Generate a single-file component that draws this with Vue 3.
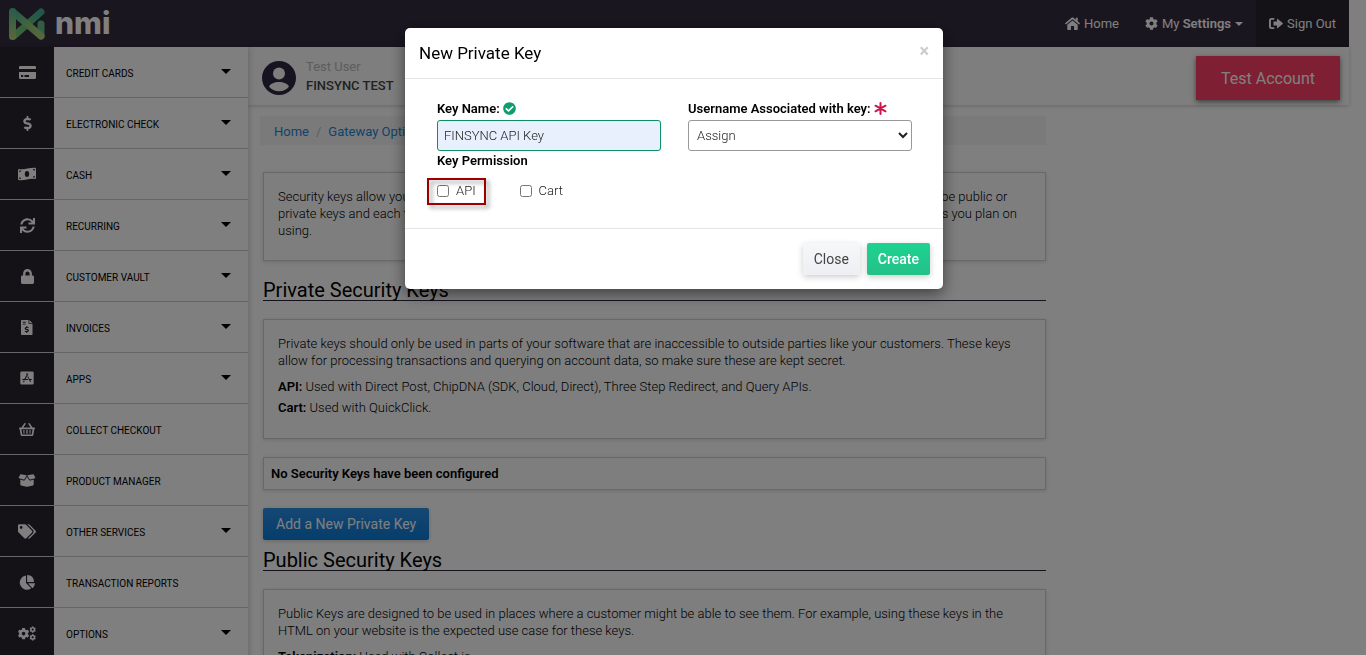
<script setup>
import { ref } from 'vue'

const cog = 'M487.4 315.7l-42.6-24.6c4.3-23.2 4.3-47 0-70.2l42.6-24.6c4.9-2.8 7.1-8.6 5.5-14-11.1-35.6-30-67.8-54.7-94.6-3.8-4.1-10-5.1-14.8-2.3L380.8 110c-17.9-15.4-38.5-27.3-60.8-35.1V25.8c0-5.6-3.9-10.5-9.4-11.7-36.7-8.2-74.3-7.8-109.2 0-5.5 1.2-9.4 6.1-9.4 11.7V75c-22.2 7.9-42.8 19.8-60.8 35.1L88.7 85.5c-4.9-2.8-11-1.9-14.8 2.3-24.7 26.7-43.6 58.9-54.7 94.6-1.7 5.4.6 11.2 5.5 14L67.3 221c-4.3 23.2-4.3 47 0 70.2l-42.6 24.6c-4.9 2.8-7.1 8.6-5.5 14 11.1 35.6 30 67.8 54.7 94.6 3.8 4.1 10 5.1 14.8 2.3l42.6-24.6c17.9 15.4 38.5 27.3 60.8 35.1v49.2c0 5.6 3.9 10.5 9.4 11.7 36.7 8.2 74.3 7.8 109.2 0 5.5-1.2 9.4-6.1 9.4-11.7v-49.2c22.2-7.9 42.8-19.8 60.8-35.1l42.6 24.6c4.9 2.8 11 1.9 14.8-2.3 24.7-26.7 43.6-58.9 54.7-94.6 1.5-5.5-.7-11.3-5.6-14.1zM256 336c-44.1 0-80-35.9-80-80s35.9-80 80-80 80 35.9 80 80-35.9 80-80 80z'

const icons = {
  card: { box: '0 0 17 13', w: 17, h: 13, paths: ['M1.300 0H15.700Q17 0 17 1.300V3H0V1.300Q0 0 1.300 0ZM0 6H17V11.700Q17 13 15.700 13H1.300Q0 13 0 11.700ZM2 9V11H4.200V9ZM5.500 9V11H10V9Z'] },
  dollar: { box: '0 0 288 512', w: 9, h: 15, paths: ['M209.2 233.4l-108-31.6C88.7 198.2 80 186.5 80 173.5c0-16.3 13.2-29.5 29.5-29.5h66.3c12.2 0 24.2 3.7 34.2 10.5 6.1 4.1 14.3 3.1 19.5-2l34.8-34c7.1-6.9 6.1-18.4-1.8-24.5C238 74.8 207.4 64.1 176 64V16c0-8.8-7.2-16-16-16h-32c-8.8 0-16 7.2-16 16v48h-2.5C45.8 64-5.4 118.7.5 183.6c4.2 46.1 39.4 83.6 83.8 96.6l102.5 30c12.5 3.7 21.2 15.3 21.2 28.3 0 16.3-13.2 29.5-29.5 29.5h-66.3C100 368 88 364.3 78 357.5c-6.1-4.1-14.3-3.1-19.5 2l-34.8 34c-7.1 6.9-6.1 18.4 1.8 24.5 24.5 19.2 55.1 29.9 86.5 30v48c0 8.8 7.2 16 16 16h32c8.8 0 16-7.2 16-16v-48.2c46.6-.9 90.3-28.6 105.7-72.7 21.5-61.6-14.6-124.8-72.5-141.7z'] },
  cash: { box: '0 0 18 14', w: 18, h: 14, paths: ['M0 3.4C0 2.6.5 2 1.2 2 6.5 3 10.500 .6 16.500 .8 17.400 .8 18 1.300 18 2V10.700C18 11.500 17.400 12 16.700 11.900 11.500 11.200 7 13.700 1.400 13.200.6 13.100 0 12.500 0 11.800ZM9 4C7.600 4 6.800 5.300 6.800 7S7.600 10 9 10 11.200 8.700 11.200 7 10.400 4 9 4ZM1.300 3.500V5.200C2.300 5.200 3 4.600 3 3.600ZM1.300 10.200V11.800L3 11.900C3 10.900 2.300 10.200 1.300 10.200ZM16.700 2.100L15 2.100C15 3.100 15.700 3.800 16.700 3.800ZM16.700 8.800C15.700 8.800 15 9.500 15 10.500L16.700 10.600Z'] },
  sync: { box: '0 0 512 512', w: 15, h: 15, paths: ['M440.65 12.57l4 82.77A247.16 247.16 0 0 0 255.83 8C134.73 8 33.91 94.92 12.29 209.82A12 12 0 0 0 24.09 224h49.05a12 12 0 0 0 11.67-9.26 175.91 175.91 0 0 1 317-56.94l-101.46-4.86a12 12 0 0 0-12.57 12v47.41a12 12 0 0 0 12 12H500a12 12 0 0 0 12-12V12a12 12 0 0 0-12-12h-47.37a12 12 0 0 0-11.98 12.57zM255.83 432a175.61 175.61 0 0 1-146-77.8l101.8 4.87a12 12 0 0 0 12.57-12v-47.4a12 12 0 0 0-12-12H12a12 12 0 0 0-12 12V500a12 12 0 0 0 12 12h47.35a12 12 0 0 0 12-12.6l-4.15-82.57A247.17 247.17 0 0 0 255.83 504c121.11 0 221.93-86.92 243.55-201.82a12 12 0 0 0-11.8-14.18h-49.05a12 12 0 0 0-11.67 9.26A175.86 175.86 0 0 1 255.83 432z'] },
  lock: { box: '0 0 448 512', w: 13, h: 15, paths: ['M400 224h-24v-72C376 68.2 307.8 0 224 0S72 68.2 72 152v72H48c-26.5 0-48 21.5-48 48v192c0 26.5 21.5 48 48 48h352c26.5 0 48-21.5 48-48V272c0-26.500-21.500-48-48-48zm-104 0H152v-72c0-39.700 32.300-72 72-72s72 32.300 72 72v72z'] },
  invoice: { box: '0 0 12 15', w: 12, h: 15, paths: ['M.8 0H7.500V3.200C7.500 3.700 7.800 4 8.300 4H11.500V14.200C11.500 14.700 11.200 15 10.700 15H.8C.3 15 0 14.700 0 14.200V.8C0 .3.3 0 .8 0ZM8.300 0L11.500 3.200H8.300ZM1.800 1.800V2.700H4.700V1.800ZM1.800 3.700V4.600H4.700V3.700ZM5.300 6V6.900C4.300 7 3.700 7.600 3.700 8.400 3.700 9.300 4.300 9.700 5.200 9.900L6.300 10.300C6.900 10.500 6.800 11.100 6.100 11.100H5.400C5 11.100 4.600 10.900 4.300 10.700L3.600 11.400C4.100 11.800 4.700 12 5.300 12V13H6.200V12C7.200 12 7.900 11.400 7.900 10.500 7.900 9.700 7.400 9.300 6.600 9.100L5.400 8.700C4.700 8.500 4.900 7.900 5.500 7.900H6.200C6.600 7.900 6.900 8 7.200 8.200L7.900 7.500C7.400 7.100 6.800 6.900 6.200 6.900V6Z'] },
  apps: { box: '0 0 14 14', w: 14, h: 14, paths: ['M1.500 .5H12.500Q13.700 .5 13.700 1.700V12.300Q13.700 13.500 12.500 13.500H1.500Q.3 13.500 .3 12.300V1.700Q.3 .5 1.500 .5ZM6.200 2.500L6.700 3.700 4.300 8H2.300V9H8.300L7.700 8H5.500L7.800 3.900 8.300 2.700 7.500 2.300 7.100 3.100 6.900 2.300ZM7.900 5L7.500 6 10.200 11 11 10.600 10.200 9H11.700V8H9.600ZM3.800 9.500L3 11 3.900 11.400 4.800 9.700Z'] },
  basket: { box: '0 0 17 14', w: 16, h: 13, paths: ['M5.600 .3Q6.300-.2 6.900 .3 7.300 .8 6.900 1.400L4.600 4.800H12.400L10.100 1.400Q9.700 .8 10.100 .3 10.700-.2 11.400 .3L14.500 4.800H16.400Q17 4.800 17 5.400V6.200Q17 6.800 16.400 6.800L15.300 12.900Q15.200 14 14.100 14H2.900Q1.800 14 1.700 12.900L.6 6.800Q0 6.800 0 6.200V5.400Q0 4.800 .6 4.800H2.500ZM2.500 6.800L3.400 12.400H13.600L14.500 6.800ZM4.500 7.600H5.800V11.600H4.800ZM7.800 7.600H9.200V11.600H7.800ZM11.200 7.600H12.500L12.200 11.600H11.200Z'] },
  box: { box: '0 0 18 14', w: 18, h: 13, paths: ['M2 .4L8.700 1.300 6.300 5.700Q6 6.200 5.400 6L.4 4.600Q-.1 4.400 .1 3.900L1.700 .6ZM16 .4L9.300 1.300 11.700 5.700Q12 6.200 12.600 6L17.600 4.600Q18.100 4.400 17.900 3.900L16.300 .6ZM9 2.700L10.800 6Q11.400 7.300 12.800 6.900L16.200 5.900V11.400Q16.200 12.200 15.400 12.400L9.500 13.800Q9 13.900 8.500 13.800L2.600 12.400Q1.800 12.200 1.800 11.400V5.900L5.200 6.900Q6.600 7.300 7.200 6Z'] },
  tags: { box: '0 0 640 512', w: 18, h: 15, paths: ['M497.941 225.941L286.059 14.059A48 48 0 0 0 252.118 0H48C21.49 0 0 21.49 0 48v204.118a48 48 0 0 0 14.059 33.941l211.882 211.882c18.744 18.745 49.136 18.746 67.882 0l204.118-204.118c18.745-18.745 18.745-49.137 0-67.882zM112 160c-26.51 0-48-21.49-48-48s21.49-48 48-48 48 21.49 48 48-21.49 48-48 48zm513.941 133.823L421.823 497.941c-18.745 18.745-49.137 18.745-67.882 0l-.36-.36L527.64 323.522c16.999-16.999 26.362-39.6 26.362-63.64s-9.362-46.641-26.362-63.64L331.397 0h48.721a48 48 0 0 1 33.941 14.059l211.882 211.882c18.745 18.745 18.745 49.137 0 67.882z'] },
  pie: { box: '0 0 16 15', w: 16, h: 15, paths: ['M7 .9V8L12 13Q12.300 13.300 11.900 13.600A7.200 7.200 0 1 1 6.500 .5Q7 .5 7 .9ZM8.500 0Q14.500 .4 15 6.600 15 7 14.600 7H8.100V.4Q8.100 0 8.500 0ZM9 8.200H15.500Q16 8.200 15.900 8.700 15.500 11.400 13.800 12.900 13.500 13.200 13.200 12.900Z'] },
  cogs: { box: '0 0 640 512', w: 18, h: 15, paths: [cog], cluster: true },
}

const menu = [
  { icon: 'card', label: 'Credit Cards', more: true },
  { icon: 'dollar', label: 'Electronic Check', more: true },
  { icon: 'cash', label: 'Cash', more: true },
  { icon: 'sync', label: 'Recurring', more: true },
  { icon: 'lock', label: 'Customer Vault', more: true },
  { icon: 'invoice', label: 'Invoices', more: true },
  { icon: 'apps', label: 'Apps', more: true },
  { icon: 'basket', label: 'Collect Checkout' },
  { icon: 'box', label: 'Product Manager' },
  { icon: 'tags', label: 'Other Services', more: true },
  { icon: 'pie', label: 'Transaction Reports' },
  { icon: 'cogs', label: 'Options', more: true },
]

const keyName = ref('FINSYNC API Key')
const user = ref('Assign')
const api = ref(false)
const cart = ref(false)
</script>

<template>
  <div class="page">
    <header class="topbar">
      <a class="brand" href="#" aria-label="nmi">
        <svg width="38" height="34" viewBox="0 0 38 34" aria-hidden="true">
          <defs>
            <linearGradient id="leaf" x1="0" y1="0" x2="0" y2="1">
              <stop offset="0" stop-color="#4db89a" />
              <stop offset="1" stop-color="#b9cf72" />
            </linearGradient>
            <linearGradient id="band" gradientUnits="userSpaceOnUse" x1="4" y1="30" x2="34" y2="4">
              <stop offset="0" stop-color="#8cc67a" />
              <stop offset="0.500" stop-color="#5fc07e" />
              <stop offset="1" stop-color="#3fae96" />
            </linearGradient>
            <linearGradient id="cross" gradientUnits="userSpaceOnUse" x1="4" y1="4" x2="34" y2="30">
              <stop offset="0" stop-color="#45b59a" />
              <stop offset="0.500" stop-color="#86c97c" />
              <stop offset="1" stop-color="#b3ce78" />
            </linearGradient>
          </defs>
          <g fill="none" stroke-width="7" stroke-linecap="round" stroke-linejoin="round">
            <path d="M33 17V29" stroke="#62bd88" />
            <path d="M6 29L33 5" stroke="url(#band)" />
            <path d="M5 5L33 29" stroke="url(#cross)" />
          </g>
          <rect x="1" y="1" width="7" height="32" rx="3.500" fill="url(#leaf)" />
        </svg>
        <span class="wordmark">nmi</span>
      </a>
      <nav class="topnav">
        <a href="#">
          <svg width="15" height="13" viewBox="0 0 16 14" aria-hidden="true">
            <path fill="currentColor" d="M8 3.700L13.600 8.400V13.300Q13.600 13.900 13 13.900H9.700V9.600H6.300V13.900H3Q2.400 13.900 2.400 13.300V8.400ZM7.300 .6Q8 .1 8.700 .6L11.500 2.900V.9H13.600V4.700L15.700 6.500Q16.100 6.900 15.800 7.300L15.300 7.900Q15 8.200 14.600 7.900L8 2.500 1.400 7.900Q1 8.200 .7 7.900L.2 7.300Q-.1 6.900 .3 6.500Z" />
          </svg>
          Home
        </a>
        <a href="#">
          <svg width="13" height="13" viewBox="0 0 512 512" aria-hidden="true"><path fill="currentColor" :d="cog" /></svg>
          <span>My <b>Settings</b></span>
          <i class="caret small"></i>
        </a>
        <a class="out" href="#">
          <svg width="14" height="11" viewBox="0 0 14 11" aria-hidden="true">
            <path fill="currentColor" d="M5.300 0V1.800H2.600Q1.900 1.800 1.900 2.500V8.500Q1.900 9.200 2.600 9.200H5.300V11H2.600Q0 11 0 8.500V2.500Q0 0 2.600 0ZM8.500 .8L13.700 5.100Q14.100 5.500 13.700 5.900L8.500 10.200Q8 10.400 8 9.700V7.400H4.500V3.600H8V1.300Q8 .6 8.500 .8Z" />
          </svg>
          Sign Out
        </a>
      </nav>
    </header>

    <div class="body">
      <nav class="sidebar">
        <a v-for="item in menu" :key="item.label" class="row" href="#">
          <span class="tile">
            <svg :width="icons[item.icon].w" :height="icons[item.icon].h" :viewBox="icons[item.icon].box" aria-hidden="true">
              <g v-if="icons[item.icon].cluster" fill="currentColor">
                <path :d="cog" transform="translate(-12 50) scale(.82)" />
                <path :d="cog" transform="translate(405 0) scale(.46)" />
                <path :d="cog" transform="translate(405 276) scale(.46)" />
              </g>
              <template v-else>
                <path v-for="p in icons[item.icon].paths" :key="p" :d="p" fill="currentColor" fill-rule="evenodd" />
              </template>
            </svg>
          </span>
          <span class="name">{{ item.label }}</span>
          <i v-if="item.more" class="caret"></i>
        </a>
      </nav>

      <main class="main">
        <div class="userbar">
          <svg width="34" height="34" viewBox="0 0 34 34" aria-hidden="true">
            <circle cx="17" cy="17" r="17" fill="#2f2740" />
            <circle cx="17" cy="12.500" r="6" fill="#fafafa" />
            <path d="M7 25.500C8.500 22.500 12.500 21 17 21S25.500 22.500 27 25.500C25 28.500 21 30.300 17 30.300S9 28.500 7 25.500Z" fill="#fafafa" />
          </svg>
          <div class="who">
            <span>Test User</span>
            <strong>FINSYNC TEST</strong>
          </div>
          <button class="account" type="button">Test Account</button>
        </div>

        <div class="columns">
          <div class="content">
            <nav class="crumbs" aria-label="Breadcrumb">
              <a href="#">Home</a><i>/</i><a href="#">Gateway Options</a><i>/</i><span>Security Keys</span>
            </nav>

            <div class="panel intro">
              <p>
                Security keys allow you to connect to the gateway without sharing your username or password with others. They can be public or<br>
                private keys and each type has its own permissions, so choose carefully the ones that match the features and services you plan on<br>
                using.
              </p>
            </div>

            <h2>Private Security Keys</h2>
            <div class="panel">
              <p>
                Private keys should only be used in parts of your software that are inaccessible to outside parties like your customers. These keys<br>
                allow for processing transactions and querying on account data, so make sure these are kept secret.
              </p>
              <p><b>API:</b> Used with Direct Post, ChipDNA (SDK, Cloud, Direct), Three Step Redirect, and Query APIs.</p>
              <p><b>Cart:</b> Used with QuickClick.</p>
            </div>

            <div class="empty">No Security Keys have been configured</div>
            <button class="add" type="button">Add a New Private Key</button>

            <h2>Public Security Keys</h2>
            <div class="panel">
              <p>
                Public Keys are designed to be used in places where a customer might be able to see them. For example, using these keys in the<br>
                HTML on your website is the expected use case for these keys.
              </p>
              <p><b>Tokenization:</b> Used with Collect.js.</p>
            </div>
          </div>
        </div>
      </main>
    </div>
  </div>

  <div class="backdrop">
    <div class="modal" role="dialog" aria-modal="true" aria-labelledby="modal-title">
      <div class="modal-head">
        <h1 id="modal-title">New Private Key</h1>
        <button class="dismiss" type="button" aria-label="Dismiss">×</button>
      </div>
      <form class="modal-body" @submit.prevent>
        <div class="field">
          <label for="key-name">
            Key Name:
            <svg width="13" height="13" viewBox="0 0 512 512" aria-hidden="true"><path fill="#0e9e6b" d="M504 256c0 136.967-111.033 248-248 248S8 392.967 8 256 119.033 8 256 8s248 111.033 248 248zM227.314 387.314l184-184c6.248-6.248 6.248-16.379 0-22.627l-22.627-22.627c-6.248-6.249-16.379-6.249-22.628 0L216 308.118l-70.059-70.059c-6.248-6.248-16.379-6.248-22.628 0l-22.627 22.627c-6.248 6.248-6.248 16.379 0 22.627l104 104c6.249 6.249 16.379 6.249 22.628.001z" /></svg>
          </label>
          <input id="key-name" v-model="keyName" type="text">
        </div>
        <div class="field">
          <label for="key-user">
            Username Associated with key:
            <svg width="13" height="13" viewBox="0 0 13 13" aria-hidden="true"><path d="M6.500 1V12M1.500 3.700L11.500 9.300M11.500 3.700L1.500 9.300" stroke="#c8174b" stroke-width="2" stroke-linecap="round" /></svg>
          </label>
          <select id="key-user" v-model="user"><option>Assign</option></select>
        </div>
        <fieldset>
          <legend>Key Permission</legend>
          <div class="checks">
            <label class="check marked"><input v-model="api" type="checkbox"> API</label>
            <label class="check"><input v-model="cart" type="checkbox"> Cart</label>
          </div>
        </fieldset>
      </form>
      <div class="modal-foot">
        <button class="close" type="button">Close</button>
        <button class="create" type="button">Create</button>
      </div>
    </div>
  </div>
</template>

<style>
html, body, #app { height: 100%; }
body { margin: 0; background: #fff; overflow: hidden; }
</style>

<style scoped>
.page, .backdrop, button, input, select {
  font-family: Roboto, "Open Sans", "Liberation Sans", sans-serif;
}
.page {
  height: 100%;
  overflow: hidden;
  padding-right: 17px;
  color: #000;
  font-size: 13px;
  line-height: 17px;
}
a { color: inherit; text-decoration: none; }
i { font-style: normal; }
p { margin: 0; font-weight: 300; }
button { cursor: pointer; border: 0; }

.topbar { display: flex; justify-content: space-between; height: 47px; background: #342d40; }
.brand { display: flex; align-items: center; gap: 9px; padding-left: 8px; color: #fff; }
.wordmark { font: 800 30px/36px Inter, sans-serif; padding-bottom: 2px; }
.topnav { display: flex; color: #fff; }
.topnav a { display: flex; align-items: center; gap: 4px; padding: 0 13px; }
.topnav .out { background: #28222f; }

.caret { width: 0; height: 0; border: 5px solid transparent; border-top-color: currentColor; border-bottom: 0; }
.caret.small { border-width: 4px; border-bottom: 0; }

.body { display: flex; }
.sidebar { flex: none; width: 248px; box-shadow: 1px 0 6px rgba(0, 0, 0, .2); z-index: 1; }
.row { display: flex; align-items: center; height: 50px; border-bottom: 1px solid #ccc; font-size: 10px; text-transform: uppercase; background: #fff; }
.tile { display: flex; align-items: center; justify-content: center; width: 54px; height: 50px; background: #28222f; color: #fff; }
.name { flex: 1; padding: 2px 0 0 12px; }
.row .caret { margin: 0 17px 2px 0; }

.main { flex: 1; min-width: 0; }
.userbar { display: flex; align-items: center; gap: 10px; height: 58px; padding: 0 9px 0 14px; background: #fcfcfc; box-shadow: 0 1px 4px rgba(0, 0, 0, .2); }
.userbar svg { margin-top: 4px; }
.who { display: grid; gap: 2px; }
.who span { color: #bbb; }
.who strong { font-weight: 500; color: #444; }
.account { margin: 4px 0 0 auto; height: 44px; padding: 0 25px; background: #ff3e66; color: #fff; font-size: 16px; box-shadow: 0 2px 5px rgba(0, 0, 0, .5); }

.columns { display: grid; grid-template-columns: 29fr 11fr; padding-top: 11px; }
.content { padding-left: 12px; }
.crumbs { display: flex; align-items: center; box-sizing: border-box; height: 29px; padding: 2px 0 0 14px; background: #f5f5f5; color: #1f86d8; }
.crumbs i { margin: 0 7px; color: #bbb; }
.crumbs span { color: #777; }
.panel, .empty { margin-left: 3px; border: 1px solid #d0d0d0; background: #fcfcfc; box-shadow: 0 1px 4px rgba(0, 0, 0, .15); white-space: nowrap; }
.panel { padding: 15px 14px 22px; }
.panel p + p { margin-top: 4px; }
.panel p:nth-child(2) { margin-top: 9px; }
.intro { margin-top: 27px; padding-bottom: 21px; }
h2 { margin: 16px 0 18px 3px; padding-top: 3px; border-bottom: 1px solid #2b2538; font-size: 20px; font-weight: 400; line-height: 20px; }
b { font-weight: 600; }
.empty { margin-top: 18px; padding: 7px; font-weight: 600; }
.add { display: block; height: 32px; margin: 18px 0 0 3px; padding: 0 13px; border-radius: 2px; background: linear-gradient(#2b8fe8, #0b7bd8); color: #fff; font-size: 14px; box-shadow: 0 1px 4px rgba(0, 0, 0, .2); }
.add + h2 { margin-top: 7px; }

.backdrop { position: fixed; inset: 0; z-index: 5; padding: 28px 18px 0 0; background: rgba(0, 0, 0, .5); color: #000; font-size: 13px; line-height: 17px; }
.modal { max-width: 538px; margin: 0 auto; border-radius: 5px; background: #fff; box-shadow: 0 5px 15px rgba(0, 0, 0, .5); }
.modal-head { display: flex; justify-content: space-between; align-items: center; height: 50px; padding: 0 14px; border-bottom: 1px solid #e5e5e5; }
h1 { margin: 0; font-size: 17px; font-weight: 400; }
.dismiss { padding: 0 0 4px; background: none; color: #ccc; font-size: 18px; font-weight: 700; line-height: 18px; }
.modal-body { display: grid; grid-template-columns: 1fr 1fr; column-gap: 27px; padding: 21px 31px 23px 32px; }
.field label { display: flex; align-items: center; gap: 3px; height: 17px; margin-bottom: 3px; font-weight: 600; }
.field input, .field select { display: block; box-sizing: border-box; width: 100%; height: 31px; padding: 0 6px; border: 1px solid #999; border-radius: 3px; background: #fff; color: #222; font-size: 13px; font-weight: 300; }
.field input { border-color: #0e8e62; background: #e8f0fe; }
.field select { padding: 0 4px; }
fieldset { grid-column: 1 / -1; min-width: 0; margin: 0; padding: 0; border: 0; }
legend { padding: 0; font-weight: 600; line-height: 20px; }
.checks { display: flex; gap: 24px; margin: 7px 0 0 -10px; }
.check { position: relative; display: flex; align-items: center; gap: 7px; box-sizing: border-box; height: 27px; padding: 0 10px 2px; color: #222; font-weight: 300; }
.check input { width: 12px; height: 12px; margin: 0; }
.marked::after { content: ""; position: absolute; inset: 0; border: 2px solid #900; filter: drop-shadow(3px 3px 2px rgba(0, 0, 0, .4)); pointer-events: none; }
.modal-foot { display: flex; justify-content: flex-end; gap: 7px; padding: 14px 13px; border-top: 1px solid #e5e5e5; }
.modal-foot button { height: 32px; padding: 0 11px; border-radius: 2px; font-size: 14px; box-shadow: 0 2px 6px rgba(0, 0, 0, .2); }
.close { background: linear-gradient(#f6f7f9, #eeeff2); color: #444; }
.create { background: linear-gradient(#1dd391, #24c088); color: #fff; font-weight: 500; }
</style>
